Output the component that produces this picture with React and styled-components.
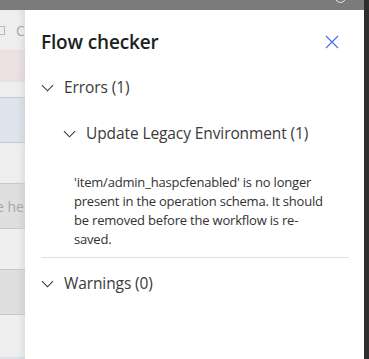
import styled, { createGlobalStyle } from "styled-components";

const GlobalStyle = createGlobalStyle`
  *, *::before, *::after {
    box-sizing: border-box;
  }
  html, body {
    margin: 0;
    padding: 0;
    overflow: hidden;
    background: #f0f0f0;
  }
  body {
    font-family: "Open Sans", "Noto Sans", sans-serif;
  }
`;

const Screen = styled.div`
  display: flex;
  width: 369px;
  height: 359px;
`;

const Main = styled.div`
  flex: 1;
  display: flex;
  flex-direction: column;
`;

const TopBar = styled.div`
  position: relative;
  height: 10px;
  flex: none;
  background: #7b7b7b;
`;

const TopBarIcon = styled.span`
  position: absolute;
  right: 18px;
  top: -8px;
  width: 11px;
  height: 11px;
  border: 1px solid #e8e8e8;
  border-radius: 50%;
`;

const Body = styled.div`
  flex: 1;
  display: flex;
`;

const Backdrop = styled.div`
  width: 25px;
  display: flex;
  flex-direction: column;
  overflow: hidden;
`;

const BackRow = styled.div`
  height: ${(p) => p.$h}px;
  flex: none;
  display: flex;
  align-items: center;
  gap: 11px;
  background: ${(p) => p.$bg || "#efefef"};
  border-bottom: ${(p) => (p.$line ? "1px solid #c9c9c9" : "none")};
  font-family: "Open Sans", sans-serif;
  font-size: 14px;
  color: #a6a6a6;
  white-space: nowrap;
  box-shadow: inset -7px 0 6px -4px rgba(0, 0, 0, 0.07);
`;

const BackCheck = styled.span`
  display: inline-block;
  flex: none;
  width: 6px;
  height: 9px;
  margin-left: -1px;
  border: 1px solid #b8b8b8;
  border-left: none;
`;

const Panel = styled.aside`
  flex: 1;
  background: #ffffff;
  padding: 14px 15px 0 16px;
  display: flex;
  flex-direction: column;
  color: #323130;
`;

const Header = styled.div`
  display: flex;
  align-items: center;
  justify-content: space-between;
  height: 36px;
`;

const Title = styled.h1`
  margin: 0;
  font-size: 19px;
  font-weight: 600;
  color: #201f1e;
  letter-spacing: -0.15px;
`;

const CloseButton = styled.button`
  border: none;
  background: none;
  padding: 0;
  width: 14px;
  height: 14px;
  margin-right: 10px;
  display: flex;
  cursor: pointer;
`;

const Section = styled.div`
  display: flex;
  flex-direction: column;
`;

const SectionHead = styled.div`
  display: flex;
  align-items: center;
  gap: 10px;
  height: 32px;
  margin-top: ${(p) => p.$top || 0}px;
  margin-left: ${(p) => p.$indent || 0}px;
  font-size: 15.5px;
  letter-spacing: -0.1px;
  color: #3b3a39;
`;

const Chevron = () => (
  <svg width="13" height="13" viewBox="0 0 14 14" fill="none">
    <path d="M1 4.5 L7 10.5 L13 4.5" stroke="#323130" strokeWidth="1.1" />
  </svg>
);

const Message = styled.p`
  margin: 24px 0 0 33px;
  width: 252px;
  font-size: 13px;
  letter-spacing: -0.2px;
  line-height: 19px;
  color: #323130;
`;

const Divider = styled.hr`
  margin: 8px 0 0;
  border: none;
  border-top: 1px solid #e1dfdd;
`;

const EdgeStrip = styled.div`
  width: 5px;
  background: #2e2e2e;
`;

const backRows = [
  { h: 40, bg: "#eeeeee", content: "check" },
  { h: 32, bg: "#ebe1e2" },
  { h: 16, bg: "#efefef", line: true },
  { h: 45, bg: "#dfe3ec", line: true },
  { h: 41, bg: "#efefef", line: true },
  { h: 45, bg: "#dfdfdf", content: "e he", line: true },
  { h: 41, bg: "#efefef", line: true },
  { h: 45, bg: "#dfdfdf", line: true },
  { h: 42, bg: "#efefef" },
  { h: 4, bg: "#dfe3ec" },
];

const App = () => {
  return (
    <>
      <GlobalStyle />
      <Screen>
        <Main>
          <TopBar>
            <TopBarIcon />
          </TopBar>
          <Body>
            <Backdrop>
              {backRows.map((r, i) => (
                <BackRow key={i} $h={r.h} $bg={r.bg} $line={r.line}>
                  {r.content === "check" && (
                    <>
                      <BackCheck />
                      <span>Co</span>
                    </>
                  )}
                  {r.content === "e he" && <span style={{ marginLeft: -4 }}>e he</span>}
                </BackRow>
              ))}
            </Backdrop>
            <Panel>
              <Header>
                <Title>Flow checker</Title>
                <CloseButton aria-label="Close">
                  <svg width="14" height="14" viewBox="0 0 14 14">
                    <path d="M1 1 L13 13 M13 1 L1 13" stroke="#4f6bed" strokeWidth="1.2" />
                  </svg>
                </CloseButton>
              </Header>
              <Section>
                <SectionHead $top={11}>
                  <Chevron />
                  <span>Errors (1)</span>
                </SectionHead>
                <SectionHead $top={14} $indent={22}>
                  <Chevron />
                  <span>Update Legacy Environment (1)</span>
                </SectionHead>
                <Message>
                  'item/admin_haspcfenabled' is no longer present in the operation schema. It should be
                  removed before the workflow is re-saved.
                </Message>
              </Section>
              <Divider />
              <Section>
                <SectionHead $top={9}>
                  <Chevron />
                  <span>Warnings (0)</span>
                </SectionHead>
              </Section>
            </Panel>
          </Body>
        </Main>
        <EdgeStrip />
      </Screen>
    </>
  );
};

export default App;
